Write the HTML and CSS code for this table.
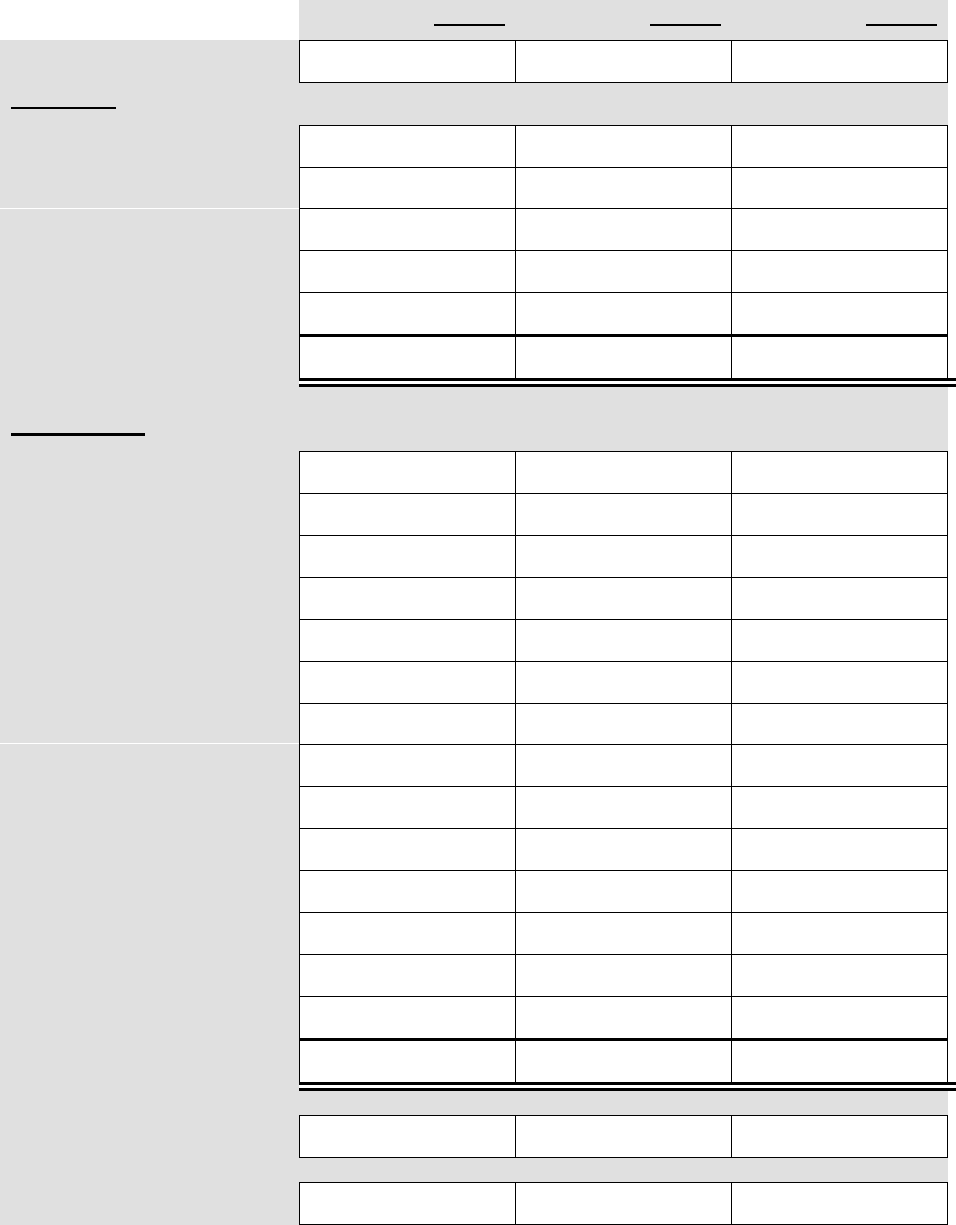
FILE: index.html
```html
<!DOCTYPE html>
<html lang="en">
<head>
<meta charset="utf-8">
<title>Statement</title>
<link rel="stylesheet" href="styles.css">
</head>
<body>
<div class="sheet">
  <div class="corner"></div>
  <div class="head">
    <div class="hcell"><span class="hline"></span></div>
    <div class="hcell"><span class="hline"></span></div>
    <div class="hcell"><span class="hline"></span></div>
  </div>

  <div class="side">
    <div class="sec sec1"><span class="label l1"></span></div>
    <div class="sec sec2"><span class="label l2"></span></div>
    <div class="sec sec3"></div>
  </div>

  <div class="main">
    <div class="block">
      <div class="row"><div class="c"></div><div class="c"></div><div class="c"></div></div>
    </div>

    <div class="block gap-b">
      <div class="row"><div class="c"></div><div class="c"></div><div class="c"></div></div>
      <div class="row r41"><div class="c"></div><div class="c"></div><div class="c"></div></div>
      <div class="row"><div class="c"></div><div class="c"></div><div class="c"></div></div>
      <div class="row"><div class="c"></div><div class="c"></div><div class="c"></div></div>
      <div class="row"><div class="c"></div><div class="c"></div><div class="c"></div></div>
      <div class="row tot"><div class="c"></div><div class="c"></div><div class="c"></div></div>
    </div>
    <div class="dbl"></div>

    <div class="block gap-c">
      <div class="row"><div class="c"></div><div class="c"></div><div class="c"></div></div>
      <div class="row"><div class="c"></div><div class="c"></div><div class="c"></div></div>
      <div class="row"><div class="c"></div><div class="c"></div><div class="c"></div></div>
      <div class="row"><div class="c"></div><div class="c"></div><div class="c"></div></div>
      <div class="row"><div class="c"></div><div class="c"></div><div class="c"></div></div>
      <div class="row"><div class="c"></div><div class="c"></div><div class="c"></div></div>
      <div class="row r41"><div class="c"></div><div class="c"></div><div class="c"></div></div>
      <div class="row"><div class="c"></div><div class="c"></div><div class="c"></div></div>
      <div class="row"><div class="c"></div><div class="c"></div><div class="c"></div></div>
      <div class="row"><div class="c"></div><div class="c"></div><div class="c"></div></div>
      <div class="row"><div class="c"></div><div class="c"></div><div class="c"></div></div>
      <div class="row"><div class="c"></div><div class="c"></div><div class="c"></div></div>
      <div class="row"><div class="c"></div><div class="c"></div><div class="c"></div></div>
      <div class="row"><div class="c"></div><div class="c"></div><div class="c"></div></div>
      <div class="row tot"><div class="c"></div><div class="c"></div><div class="c"></div></div>
    </div>
    <div class="dbl"></div>

    <div class="block gap-d">
      <div class="row"><div class="c"></div><div class="c"></div><div class="c"></div></div>
    </div>

    <div class="block gap-e">
      <div class="row"><div class="c"></div><div class="c"></div><div class="c"></div></div>
    </div>
  </div>
</div>
</body>
</html>
```

FILE: styles.css
```css
html, body {
  margin: 0;
  padding: 0;
  background: #ffffff;
  font-family: "Liberation Sans", Arial, sans-serif;
}

.sheet {
  display: grid;
  grid-template-columns: 299px 649px;
  grid-template-rows: 40px auto;
  width: 948px;
  background: #e0e0e0;
}

.corner {
  background: #ffffff;
}

.head {
  display: grid;
  grid-template-columns: repeat(3, 216px);
  background: #e0e0e0;
}

.hcell {
  display: flex;
  justify-content: flex-end;
  align-items: flex-start;
  padding: 24px 10px 0 0;
}

.hline {
  display: block;
  width: 71px;
  height: 2px;
  background: #000000;
}

.side {
  display: flex;
  flex-direction: column;
}

.sec {
  border-bottom: 1px solid #ffffff;
  padding-left: 11px;
}

.sec1 {
  height: 169px;
  padding-top: 67px;
  box-sizing: border-box;
}

.sec2 {
  height: 535px;
  padding-top: 224px;
  box-sizing: border-box;
}

.sec3 {
  flex: 1;
  border-bottom: 0;
}

.label {
  display: block;
  background: #000000;
}

.l1 {
  width: 105px;
  height: 2px;
}

.l2 {
  width: 134px;
  height: 3px;
}

.main {
  display: flex;
  flex-direction: column;
}

.block {
  border-top: 1px solid #000000;
  border-left: 1px solid #000000;
  background: #ffffff;
}

.row {
  display: grid;
  grid-template-columns: repeat(3, 216px);
}

.c {
  height: 41px;
  border-right: 1px solid #000000;
  border-bottom: 1px solid #000000;
}

.r41 .c {
  height: 40px;
}

.tot .c {
  border-top: 2px solid #000000;
  border-bottom: 0;
}

.dbl {
  height: 3px;
  margin-right: -8px;
  background: #ffffff;
  border-top: 3px solid #000000;
  border-bottom: 3px solid #000000;
}

.gap-b { margin-top: 42px; }
.gap-c { margin-top: 64px; }
.gap-d { margin-top: 24px; }
.gap-e { margin-top: 24px; }
```
